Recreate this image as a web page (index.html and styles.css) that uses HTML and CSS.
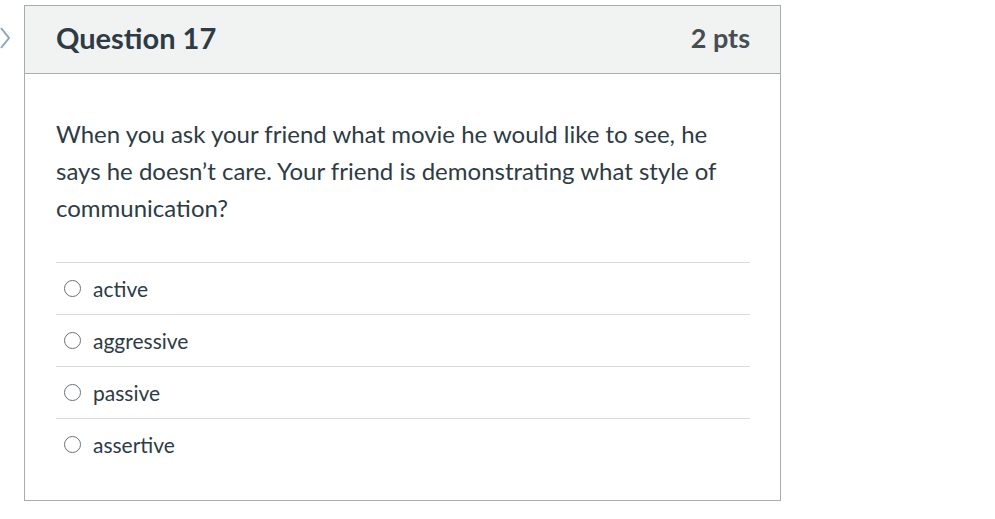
FILE: index.html
```html
<!DOCTYPE html>
<html>
<head>
<meta charset="utf-8">
<link rel="stylesheet" href="styles.css">
</head>
<body>
<div class="page">
  <svg class="chevron" width="12" height="22" viewBox="0 0 12 22"><path d="M2 1 L10 11 L2 21" fill="none" stroke="#8fa5bb" stroke-width="2"/></svg>
  <div class="card">
    <div class="header">
      <h2 class="title">Question 17</h2>
      <span class="pts">2 pts</span>
    </div>
    <div class="body">
      <p class="question">When you ask your friend what movie he would like to see, he says he doesn’t care. Your friend is demonstrating what style of communication?</p>
      <div class="answers">
        <label class="answer"><span class="radio"></span><span class="atext">active</span></label>
        <label class="answer"><span class="radio"></span><span class="atext">aggressive</span></label>
        <label class="answer"><span class="radio"></span><span class="atext">passive</span></label>
        <label class="answer"><span class="radio"></span><span class="atext">assertive</span></label>
      </div>
    </div>
  </div>
</div>
</body>
</html>
```
FILE: styles.css
```css
html, body {
  margin: 0;
  padding: 0;
  background: #fff;
}
body {
  font-family: Lato, "Open Sans", sans-serif;
  color: #2d3b45;
}
.page {
  position: relative;
  padding: 5px 0 0 24px;
}
.chevron {
  position: absolute;
  left: -1px;
  top: 27px;
}
.card {
  width: 757px;
  border: 1px solid #a8acad;
  box-sizing: border-box;
  height: 496px;
}
.header {
  display: flex;
  justify-content: space-between;
  align-items: center;
  height: 68px;
  background: #f1f3f3;
  border-bottom: 1px solid #a8acad;
  padding: 0 30px 5px 31px;
  box-sizing: border-box;
}
.title {
  margin: 0;
  font-size: 29px;
  font-weight: 700;
  color: #2d3b45;
}
.pts {
  font-size: 27px;
  font-weight: 700;
  color: #464e53;
}
.body {
  padding: 41px 30px 0 31px;
}
.question {
  margin: 0;
  font-size: 24px;
  line-height: 37px;
  color: #2d3b45;
}
.answers {
  margin-top: 36px;
}
.answer {
  display: flex;
  align-items: center;
  height: 51px;
  border-top: 1px solid #d8dbdc;
  padding-left: 8px;
}
.radio {
  width: 17px;
  height: 17px;
  border: 1.5px solid #6b7176;
  border-radius: 50%;
  box-sizing: border-box;
  margin-right: 12px;
}
.atext {
  font-size: 21px;
  color: #2d3b45;
}
```
